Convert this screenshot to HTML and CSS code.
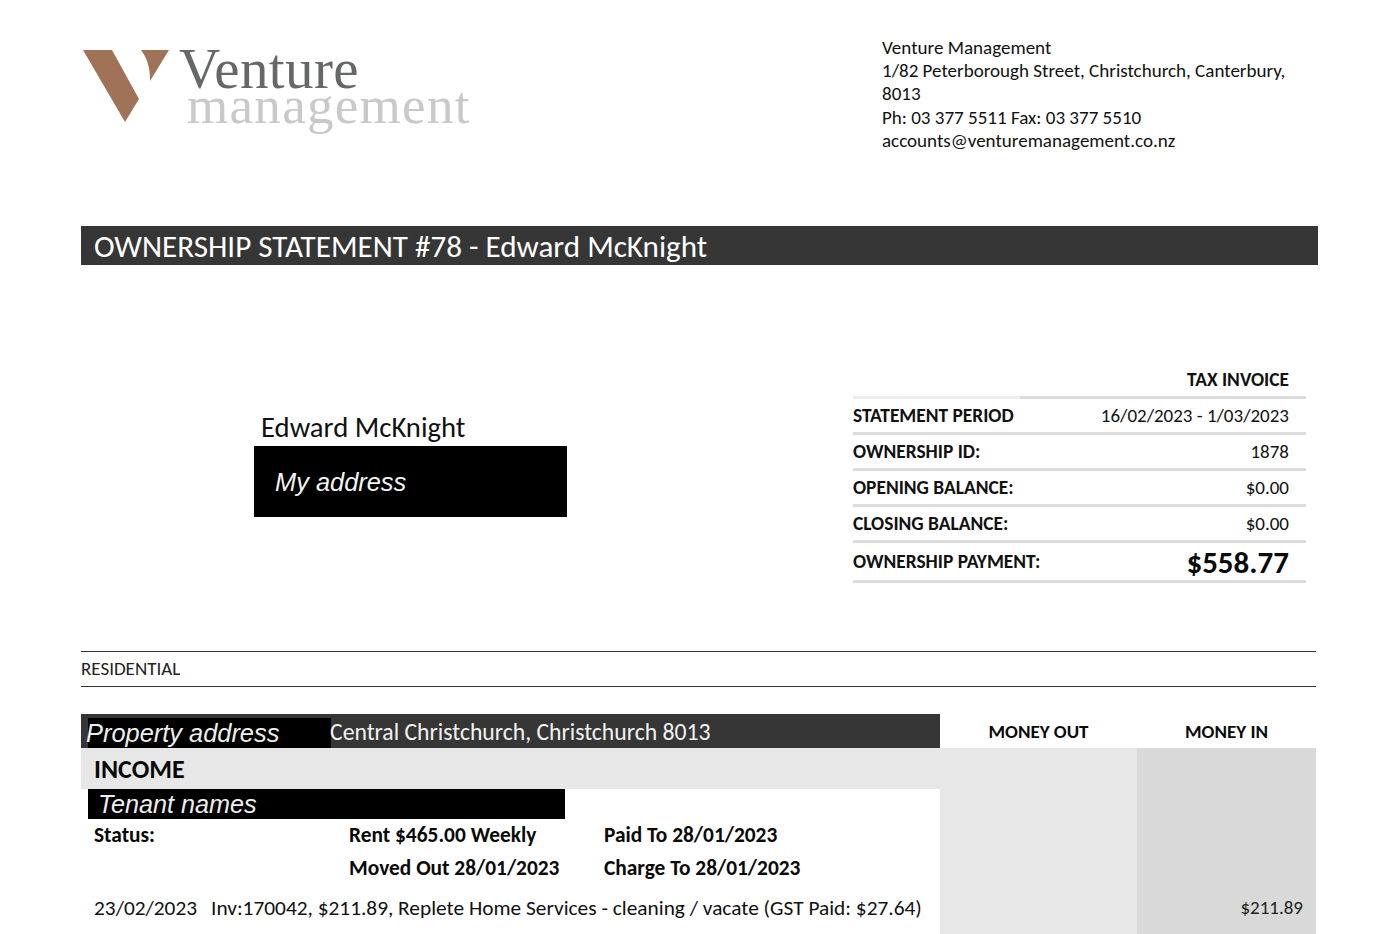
FILE: index.html
```html
<!DOCTYPE html>
<html lang="en">
<head>
<meta charset="utf-8">
<title>Ownership Statement #78</title>
<link rel="stylesheet" href="styles.css">
</head>
<body>
<div class="page">
  <header class="top">
    <div class="logo">
      <svg class="mark" width="88" height="74" viewBox="0 0 88 74" aria-hidden="true">
        <path d="M1 1H30L57 50L43 73Z" fill="#a07358"/>
        <path d="M59 1H87L68 32C68 22 67 12 59 1Z" fill="#a07358"/>
      </svg>
      <div class="wordmark">
        <div class="word-a">Venture</div>
        <div class="word-b">management</div>
      </div>
    </div>
    <address class="contact">
      <div>Venture Management</div>
      <div>1/82 Peterborough Street, Christchurch, Canterbury,</div>
      <div>8013</div>
      <div>Ph: 03 377 5511 Fax: 03 377 5510</div>
      <div>accounts@venturemanagement.co.nz</div>
    </address>
  </header>

  <h1 class="title">OWNERSHIP STATEMENT #78 - Edward McKnight</h1>

  <section class="info">
    <div class="recipient">
      <div class="rec-name">Edward McKnight</div>
      <div class="rec-addr">My address</div>
    </div>
    <div class="summary">
      <div class="sum-head">TAX INVOICE</div>
      <div class="sum-row"><b>STATEMENT PERIOD</b><span>16/02/2023 - 1/03/2023</span></div>
      <div class="sum-row"><b>OWNERSHIP ID:</b><span>1878</span></div>
      <div class="sum-row"><b>OPENING BALANCE:</b><span>$0.00</span></div>
      <div class="sum-row"><b>CLOSING BALANCE:</b><span>$0.00</span></div>
      <div class="sum-row sum-total"><b>OWNERSHIP PAYMENT:</b><strong>$558.77</strong></div>
    </div>
  </section>

  <div class="section-label">RESIDENTIAL</div>

  <section class="ledger">
    <div class="main-col">
      <div class="prop-bar"><span class="prop-mask">Property address</span><span class="prop-rest">Central Christchurch, Christchurch 8013</span></div>
      <div class="income">INCOME</div>
      <div class="tenant">Tenant names</div>
      <div class="status">
        <b>Status:</b><b>Rent $465.00 Weekly</b><b>Paid To 28/01/2023</b>
        <b></b><b>Moved Out 28/01/2023</b><b>Charge To 28/01/2023</b>
      </div>
      <div class="entry">
        <span>23/02/2023</span><span>Inv:170042, $211.89, Replete Home Services - cleaning / vacate (GST Paid: $27.64)</span>
      </div>
    </div>
    <div class="out-col">
      <div class="col-head">MONEY OUT</div>
      <div class="col-body"></div>
    </div>
    <div class="in-col">
      <div class="col-head">MONEY IN</div>
      <div class="col-body"><span class="amount">$211.89</span></div>
    </div>
  </section>
</div>
</body>
</html>
```
FILE: styles.css
```css
html, body { margin: 0; padding: 0; background: #fff; }
body { height: 934px; overflow: hidden; font-family: Carlito, Lato, "Open Sans", sans-serif; color: #111; }
.page { width: 1400px; box-sizing: border-box; padding: 37px 82px 0 81px; }

.top { display: flex; justify-content: space-between; height: 189px; }
.logo { display: flex; align-items: flex-start; padding: 12px 0 0 1px; }
.mark { display: block; }
.wordmark { margin-left: 9px; font-family: "Liberation Serif", serif; margin-top: -8px; }
.word-a { font-size: 57px; line-height: 56px; color: #666868; letter-spacing: 0.4px; }
.word-b { font-size: 53px; line-height: 16px; color: #c9c9c9; margin-left: 8px; letter-spacing: 1.3px; }
.contact { width: 435px; height: 120px; margin: -1px 1px 0 0; font-style: normal; font-size: 19.05px; line-height: 23.2px; color: #111; }

.title { margin: 0; height: 39px; background: #363636; color: #fff; font-weight: 400; font-size: 31.1px; line-height: 40px; padding-left: 13px; }

.info { display: flex; justify-content: space-between; height: 386px; }
.recipient { margin: 145px 0 0 173px; width: 313px; }
.rec-name { font-size: 28.7px; line-height: 36px; padding-left: 7px; color: #111; }
.rec-addr { height: 71px; background: #000; color: #f4f4f4; font-family: "Liberation Sans", sans-serif; font-style: italic; font-size: 25.4px; line-height: 72px; padding-left: 21px; }

.summary { width: 453px; margin: 100px 12px 0 0; font-size: 19px; }
.summary b, .sum-head { font-size: 19.4px; }
.sum-head { height: 34px; line-height: 30px; text-align: right; font-weight: 700; padding-right: 17px; border-bottom: 3px solid #ddd; border-image: linear-gradient(to right, #eee 37%, #ddd 37%) 1; box-sizing: border-box; }
.sum-row { display: flex; justify-content: space-between; align-items: center; height: 36px; box-sizing: border-box; border-bottom: 3px solid #ddd; padding-right: 17px; }
.sum-total { height: 40px; }
.sum-total strong { font-size: 31px; font-weight: 700; color: #0a0a0a; }

.section-label { margin-right: 2px; height: 36px; box-sizing: border-box; border-top: 1px solid #333; border-bottom: 1px solid #333; font-size: 19px; line-height: 33px; color: #222; }

.ledger { display: flex; margin: 27px 2px 0 0; height: 220px; }
.main-col { width: 859px; }
.prop-bar { height: 34px; background: #363636; display: flex; align-items: center; padding-left: 7px; box-sizing: border-box; }
.prop-mask { width: 243px; height: 30px; margin-top: 3px; background: #000; color: #eee; font-family: "Liberation Sans", sans-serif; font-style: italic; font-size: 25.4px; line-height: 31px; text-indent: -2px; }
.prop-rest { margin-left: -1px; color: #f2f2f2; font-size: 23.7px; }
.income { height: 41px; background: #e7e7e7; font-size: 26px; font-weight: 700; line-height: 42px; padding-left: 13px; color: #0a0a0a; }
.tenant { width: 467px; height: 30px; margin-left: 7px; padding-left: 10px; background: #000; color: #eee; font-family: "Liberation Sans", sans-serif; font-style: italic; font-size: 25.2px; line-height: 31px; }
.status { display: grid; grid-template-columns: 255px 255px 1fr; grid-auto-rows: 33px; padding-left: 13px; font-size: 21.4px; line-height: 33px; color: #0a0a0a; }
.entry { display: flex; gap: 14px; padding-left: 13px; margin-top: 8px; font-size: 21.35px; line-height: 30px; color: #111; white-space: nowrap; }

.out-col { width: 197px; }
.in-col { width: 179px; }
.col-head { height: 34px; line-height: 36px; text-align: center; font-size: 19px; font-weight: 700; color: #0a0a0a; }
.col-body { height: 186px; box-sizing: border-box; text-align: right; }
.out-col .col-body { background: #e7e7e7; }
.in-col .col-body { background: #d9d9d9; padding: 145px 13px 0 0; font-size: 19px; line-height: 30px; }
.amount { color: #222; }
```
